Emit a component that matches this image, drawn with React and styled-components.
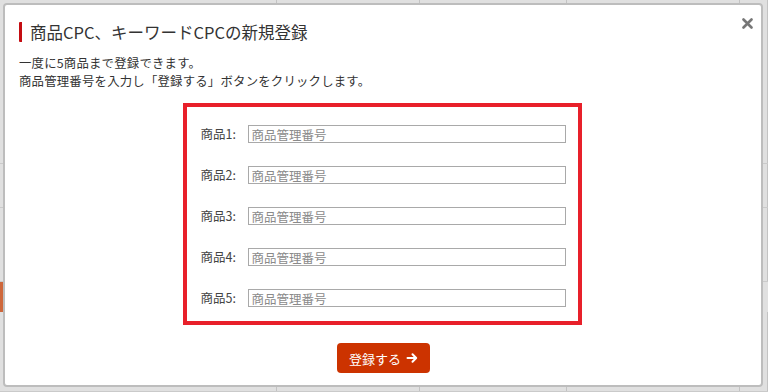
import React from "react";
import styled, { createGlobalStyle } from "styled-components";

const GlobalStyle = createGlobalStyle`
  html, body {
    margin: 0;
    padding: 0;
    width: 768px;
    height: 392px;
    overflow: hidden;
    background: #f4f4f4;
    font-family: "Noto Sans CJK JP", "Noto Sans", sans-serif;
    color: #333;
  }
`;

// page content behind the dialog
const Page = styled.div`
  width: 768px;
  height: 392px;
  display: grid;
  grid-template-rows: 164px 44px 74px 30px 1fr;
`;

const PageRow = styled.div`
  border-bottom: 1px solid #dcdcdc;
  display: grid;
  grid-template-columns: 277px 143px 147px 173px 1fr;
  > div {
    border-right: 1px solid #d4d4d4;
  }
`;

const PageTag = styled.div`
  width: 8px;
  background: #e07040;
`;

const Backdrop = styled.div`
  position: fixed;
  inset: 0;
  background: rgba(0, 0, 0, 0.08);
`;

const Dialog = styled.div`
  position: fixed;
  top: 3px;
  left: 3px;
  width: 756px;
  height: 380px;
  background: #fff;
  border: 2px solid #bdbdbd;
  border-radius: 4px;
  box-sizing: content-box;
  display: flex;
  flex-direction: column;
`;

const Header = styled.div`
  display: flex;
  align-items: center;
  justify-content: space-between;
  padding: 17px 8px 0 14px;
`;

const Title = styled.h2`
  margin: 0;
  font-size: 16.5px;
  font-weight: normal;
  line-height: 20px;
  color: #333;
  border-left: 3px solid #c40d12;
  border-radius: 1px;
  padding-left: 8px;
`;

const Close = styled.button`
  border: 0;
  background: none;
  padding: 0;
  margin-top: -18px;
  cursor: pointer;
  display: flex;
`;

const Lead = styled.div`
  margin: 12px 0 0 14px;
  font-size: 12.4px;
  color: #333;
`;

const LeadLine = styled.div`
  height: 18px;
  line-height: 18px;
  letter-spacing: 0.2px;
`;

const FormBox = styled.div`
  align-self: center;
  margin: 13px 0 0 -2px;
  width: 365px;
  border: 4px solid #e8202a;
  padding: 18px 12px 14px 14px;
  display: flex;
  flex-direction: column;
  gap: 23px;
`;

const Row = styled.label`
  display: flex;
  align-items: center;
  height: 18px;
`;

const Label = styled.span`
  width: 47px;
  font-size: 12.5px;
  line-height: 18px;
  color: #444;
`;

const Input = styled.input`
  flex: 1;
  height: 18px;
  box-sizing: border-box;
  border: 1px solid #a9a9a9;
  border-radius: 0;
  padding: 0 3px;
  font-family: inherit;
  font-size: 12.5px;
  color: #333;
  outline: none;
  &::placeholder {
    color: #8a8a8a;
  }
`;

const Footer = styled.div`
  display: flex;
  justify-content: center;
  margin-top: 18px;
`;

const Submit = styled.button`
  display: flex;
  align-items: center;
  gap: 5px;
  height: 30px;
  padding: 0 12px;
  background: #cc3300;
  color: #fff;
  border: 0;
  border-radius: 4px;
  font-family: inherit;
  font-size: 13px;
  cursor: pointer;
  margin-left: 1px;
`;

export default function App() {
  return (
    <>
      <GlobalStyle />
      <Page>
        <PageRow><div /><div /><div /><div /><div /></PageRow>
        <PageRow><div /><div /><div /><div /><div /></PageRow>
        <PageRow><div /><div /><div /><div /><div /></PageRow>
        <PageTag />
        <PageRow><div /><div /><div /><div /><div /></PageRow>
      </Page>
      <Backdrop />
      <Dialog role="dialog">
        <Header>
          <Title>商品CPC、キーワードCPCの新規登録</Title>
          <Close aria-label="close">
            <svg width="11" height="11" viewBox="0 0 11 11">
              <path d="M1.5 1.5 L9.5 9.5 M9.5 1.5 L1.5 9.5" stroke="#777" strokeWidth="2.6" strokeLinecap="round" />
            </svg>
          </Close>
        </Header>
        <Lead>
          <LeadLine>一度に5商品まで登録できます。</LeadLine>
          <LeadLine>商品管理番号を入力し「登録する」ボタンをクリックします。</LeadLine>
        </Lead>
        <FormBox>
          {[1, 2, 3, 4, 5].map((n) => (
            <Row key={n}>
              <Label>商品{n}:</Label>
              <Input placeholder="商品管理番号" />
            </Row>
          ))}
        </FormBox>
        <Footer>
          <Submit>
            登録する
            <svg width="12" height="12" viewBox="0 0 12 12">
              <path d="M1.5 6 H10 M6.5 2.2 L10.2 6 L6.5 9.8" stroke="#fff" strokeWidth="2" fill="none" strokeLinecap="round" strokeLinejoin="round" />
            </svg>
          </Submit>
        </Footer>
      </Dialog>
    </>
  );
}
